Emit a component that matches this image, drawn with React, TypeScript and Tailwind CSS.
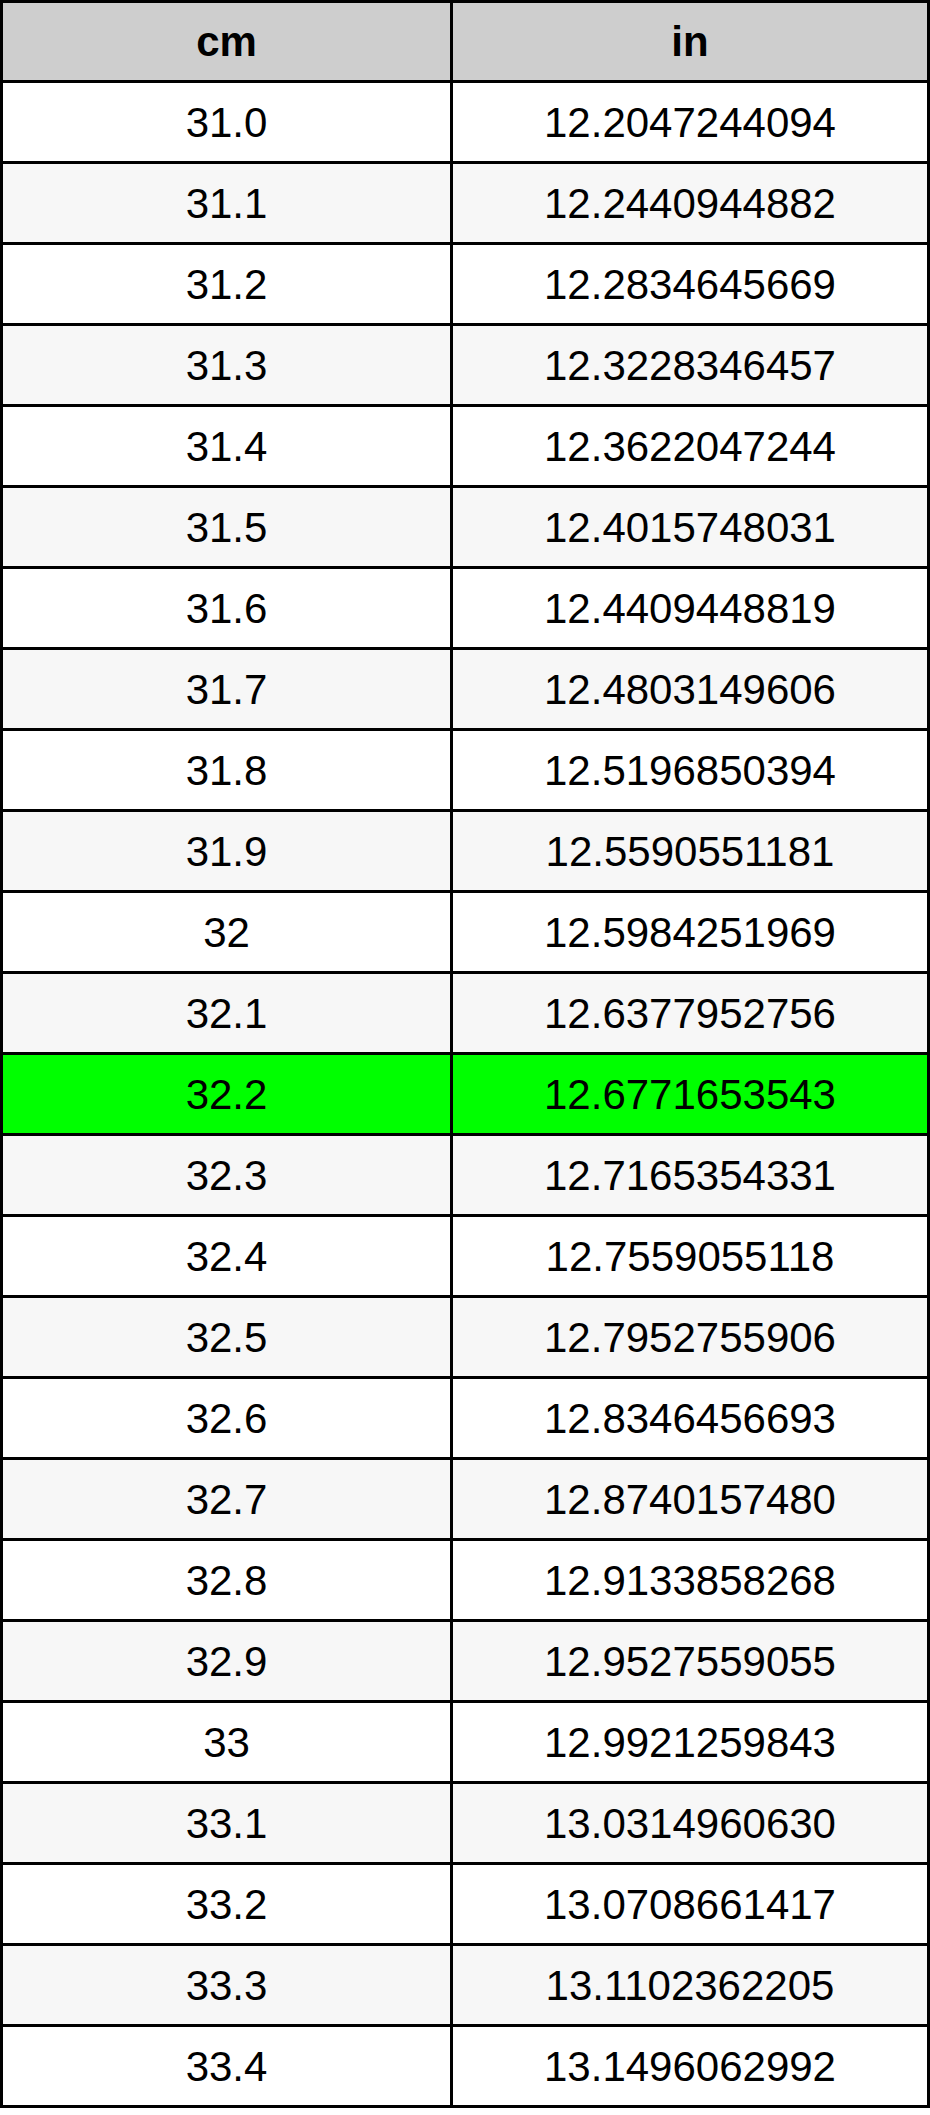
const rows: [string, string][] = [
  ["31.0", "12.2047244094"],
  ["31.1", "12.2440944882"],
  ["31.2", "12.2834645669"],
  ["31.3", "12.3228346457"],
  ["31.4", "12.3622047244"],
  ["31.5", "12.4015748031"],
  ["31.6", "12.4409448819"],
  ["31.7", "12.4803149606"],
  ["31.8", "12.5196850394"],
  ["31.9", "12.5590551181"],
  ["32", "12.5984251969"],
  ["32.1", "12.6377952756"],
  ["32.2", "12.6771653543"],
  ["32.3", "12.7165354331"],
  ["32.4", "12.7559055118"],
  ["32.5", "12.7952755906"],
  ["32.6", "12.8346456693"],
  ["32.7", "12.8740157480"],
  ["32.8", "12.9133858268"],
  ["32.9", "12.9527559055"],
  ["33", "12.9921259843"],
  ["33.1", "13.0314960630"],
  ["33.2", "13.0708661417"],
  ["33.3", "13.1102362205"],
  ["33.4", "13.1496062992"],
];

const HIGHLIGHT = "32.2";

export default function App() {
  return (
    <div className="w-[930px] bg-white font-['Liberation_Sans',Arial,sans-serif] text-black">
      <div className="border-[3px] border-black">
        {/* header */}
        <div className="grid h-[77px] grid-cols-[450px_1fr] bg-[#cecece] text-[42px] font-bold">
          <div className="flex items-center justify-center border-r-[3px] border-black">
            cm
          </div>
          <div className="flex items-center justify-center">in</div>
        </div>

        {rows.map(([cm, inch], i) => {
          const bg =
            cm === HIGHLIGHT
              ? "bg-[#00ff00]"
              : i % 2 === 0
                ? "bg-white"
                : "bg-[#f7f7f7]";
          return (
            <div
              key={cm}
              className={`grid h-[81px] grid-cols-[450px_1fr] border-t-[3px] border-black text-[42px] ${bg}`}
            >
              <div className="flex items-center justify-center border-r-[3px] border-black">
                {cm}
              </div>
              <div className="flex items-center justify-center">{inch}</div>
            </div>
          );
        })}
      </div>
    </div>
  );
}
